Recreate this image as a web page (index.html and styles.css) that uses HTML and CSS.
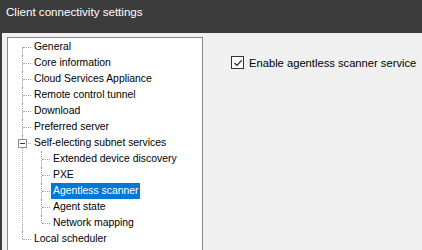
FILE: index.html
```html
<!DOCTYPE html>
<html lang="en">
<head>
    <meta charset="UTF-8">
    <title>Client connectivity settings</title>
    <link rel="stylesheet" href="styles.css">
</head>
<body>
<div class="titlebar">Client connectivity settings</div>
<div class="main">
    <div class="tree">
        <ul class="root">
            <li><span class="label">General</span></li>
            <li><span class="label">Core information</span></li>
            <li><span class="label">Cloud Services Appliance</span></li>
            <li><span class="label">Remote control tunnel</span></li>
            <li><span class="label">Download</span></li>
            <li><span class="label">Preferred server</span></li>
            <li class="open">
                <span class="toggle"></span>
                <span class="label">Self-electing subnet services</span>
                <ul>
                    <li><span class="label">Extended device discovery</span></li>
                    <li><span class="label">PXE</span></li>
                    <li><span class="label selected">Agentless scanner</span></li>
                    <li><span class="label">Agent state</span></li>
                    <li><span class="label">Network mapping</span></li>
                </ul>
            </li>
            <li><span class="label">Local scheduler</span></li>
        </ul>
    </div>
    <div class="panel">
        <label class="check">
            <span class="box">
                <svg width="10" height="10" viewBox="0 0 10 10">
                    <path d="M1.5 5 L4 7.5 L8.8 2.2" fill="none" stroke="#222" stroke-width="1.2"/>
                </svg>
            </span>
            Enable agentless scanner service
        </label>
    </div>
</div>
</body>
</html>
```

FILE: styles.css
```css
body {
  margin: 0;
  background: #f0f0f0;
  border-left: 2px solid #3c3c3c;
  height: 250px;
  box-sizing: border-box;
  overflow: hidden;
  font-family: "Liberation Sans", Arial, sans-serif;
  color: #000;
}

.titlebar {
  height: 33px;
  box-sizing: border-box;
  padding: 4px 0 0 4px;
  line-height: 16px;
  font-size: 11.6px;
  background: #3c3c3c;
  color: #fff;
}

.main {
  display: flex;
  padding-top: 4px;
}

.tree {
  margin-left: 5px;
  width: 194px;
  height: 230px;
  flex: none;
  background: #fff;
  border: 1px solid #828790;
  font-size: 10.4px;
}

.tree ul {
  list-style: none;
  margin: 0;
  padding: 0;
}

.tree .root {
  padding: 1px 0 0 14px;
}

.tree li {
  position: relative;
  padding-left: 10px;
}

.tree li ul {
  margin-left: 9px;
}

/* connector lines */
.tree li::before {
  content: "";
  position: absolute;
  left: 0;
  top: 0;
  bottom: 0;
  border-left: 1px dotted #a0a0a0;
}
.tree .root > li:first-child::before {
  top: 8px;
}
.tree li:last-child::before {
  bottom: auto;
  height: 8px;
}
.tree li::after {
  content: "";
  position: absolute;
  left: 1px;
  top: 8px;
  width: 8px;
  border-top: 1px dotted #a0a0a0;
}

.tree .label {
  display: inline-block;
  height: 16px;
  line-height: 16px;
  padding: 0 2px;
  white-space: nowrap;
}

.tree .selected {
  background: #0078d7;
  color: #fff;
}

.tree .toggle {
  position: absolute;
  left: -4px;
  top: 4px;
  width: 7px;
  height: 7px;
  border: 1px solid #919191;
  background: #fff;
  z-index: 1;
}
.tree .toggle::after {
  content: "";
  position: absolute;
  left: 1px;
  top: 3px;
  width: 5px;
  border-top: 1px solid #3a3a3a;
}

.panel {
  padding: 19px 0 0 28px;
  font-size: 11.2px;
}

.check {
  display: flex;
  align-items: center;
  gap: 5px;
  white-space: nowrap;
}

.box {
  width: 11px;
  height: 11px;
  border: 1px solid #333;
  background: #fff;
  display: flex;
  align-items: center;
  justify-content: center;
}
```
